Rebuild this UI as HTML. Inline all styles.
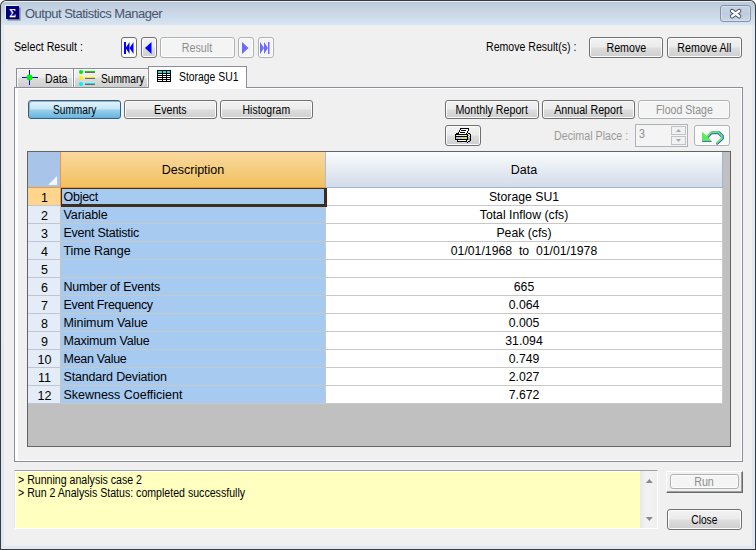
<!DOCTYPE html>
<html><head><meta charset="utf-8"><title>Output Statistics Manager</title>
<style>
*{box-sizing:border-box;margin:0;padding:0}
html,body{width:756px;height:550px;overflow:hidden;background:#fff}
body{font-family:"Liberation Sans",sans-serif;font-size:12px;color:#000;position:relative}
.abs{position:absolute}
#win{position:absolute;left:0;top:0;width:756px;height:550px;background:#3a3a3a;border-radius:6px 6px 0 0;overflow:hidden}
#frame{position:absolute;left:1px;top:1px;width:754px;height:548px;border-radius:5px 5px 0 0;background:linear-gradient(#e6ecf7 0,#e6ecf7 1px,#bccbdc 1px,#d7e4f2 24px,#e2eaf4 24px,#dfe7f2 100%)}
#client{position:absolute;left:4px;top:25px;width:748px;height:521px;background:#f0f0f0}
#title{left:25px;top:6px;font-size:13px;line-height:16px;color:#46546b;white-space:nowrap;letter-spacing:-0.5px}
#icon{left:6px;top:6px;width:13px;height:13px;background:#00007c;box-shadow:1.500px 1.500px 0 #7a7a84,-1px -1px 0 #eef2f8}
#closeb{left:720px;top:5px;width:31px;height:17px;border:1px solid #8491a8;border-radius:3px;background:linear-gradient(#c4d1e2,#bfcee0 50%,#bccbde 50%,#c8d6e6);box-shadow:inset 0 0 0 1px rgba(255,255,255,.3)}
.btn{position:absolute;border:1px solid #707070;border-radius:3px;background:linear-gradient(#f2f2f2 0,#ebebeb 48%,#dddddd 52%,#cfcfcf 100%);box-shadow:inset 0 0 0 1px #fcfcfc;text-align:center;white-space:nowrap;line-height:19px;height:19px}
.btn.dis{border-color:#adb2b5;background:#f4f4f4;color:#8e8e8e;box-shadow:inset 0 0 0 1px #fcfcfc}
.btn.sel{border-color:#2c628b;background:linear-gradient(#e5f4fc 0,#c4e5f6 48%,#98d1ef 52%,#68b3db 100%);box-shadow:inset 1px 1px 0 0 #9eb0ba}
.lbl{position:absolute;white-space:nowrap;line-height:13px;transform:scaleX(.89);transform-origin:0 0}
.t{display:inline-block;transform:scaleX(.89);transform-origin:50% 50%}
.tab{position:absolute;border:1px solid #8c8e97;border-bottom:none;background:linear-gradient(#f2f2f2 0,#ebebeb 48%,#dddddd 52%,#cfcfcf 100%);box-shadow:inset 1px 1px 0 #fcfcfc,inset -1px 0 0 #fcfcfc;white-space:nowrap}
.tab.sel{background:#fff;box-shadow:none}
#page{left:14px;top:87px;width:729px;height:375px;border:1px solid #8c8e97;background:#fff}
#pagein{left:18px;top:89px;width:723px;height:371px;background:#f0f0f0}
#grid{left:27px;top:151px;width:704px;height:296px;border:1px solid #646464;background:#c0c0c0;overflow:hidden}
.gfont{font-size:12.5px}
.row{position:absolute;left:0;height:18px;width:695px}
.rh{position:absolute;left:0;top:0;width:33px;height:18px;background:#e4ecf7;border-right:1px solid #c0c6d0;border-bottom:1px solid #c0c6d0;text-align:center;line-height:20px;padding-left:1px}
.c1{position:absolute;left:33px;top:0;width:265px;height:18px;background:#a7caf0;border-right:1px solid #c8c8c8;border-bottom:1px solid #c8c8c8;padding-left:2.500px;line-height:19px;white-space:nowrap}
.c2{position:absolute;left:298px;top:0;width:397px;height:18px;background:#fff;border-right:1px solid #c8c8c8;border-bottom:1px solid #c8c8c8;text-align:center;line-height:19px;white-space:pre;font-size:12.25px}
#log{left:14px;top:470px;width:644px;height:59px;background:#ffffc0;border:1px solid #fff;border-top-color:#a0a0a0;border-left-color:#e6e6e6;box-shadow:inset 1px 1px 0 #fff}
</style></head><body>
<div id="win"><div id="frame"></div><div id="client"></div>
<div id="icon" class="abs"></div>
<svg class="abs" style="left:6px;top:6px" width="13" height="13" viewBox="0 0 13 13"><text x="6.700" y="10.600" font-family="Liberation Serif,serif" font-size="11.500" fill="#fff" stroke="#fff" stroke-width="0.250" text-anchor="middle">Σ</text></svg>
<div id="title" class="abs">Output Statistics Manager</div>
<div id="closeb" class="abs"></div>
<svg class="abs" style="left:728px;top:7px" width="15" height="13" viewBox="0 0 15 13"><path d="M4 4l7.200 5.200M11.200 4l-7.200 5.200" stroke="#414d62" stroke-width="4.200" stroke-linecap="round" fill="none"/><path d="M4 4l7.200 5.200M11.200 4l-7.200 5.200" stroke="#fff" stroke-width="2.400" stroke-linecap="round" fill="none"/></svg>

<div class="lbl" style="left:14px;top:41px" id="l1">Select Result :</div>
<div class="btn" style="left:121px;top:37px;width:16px;height:21px;background:#fdfdf6" id="nb1"></div>
<div class="btn" style="left:141px;top:37px;width:16px;height:21px" id="nb2"></div>
<div class="btn dis" style="left:160px;top:37px;width:75px;height:21px;line-height:21px" id="nb3"><span class="t" style="transform:scaleX(0.89)">Result</span></div>
<div class="btn dis" style="left:238px;top:37px;width:16px;height:21px" id="nb4"></div>
<div class="btn dis" style="left:258px;top:37px;width:16px;height:21px" id="nb5"></div>
<svg class="abs" style="left:121px;top:37px" width="153" height="21" viewBox="0 0 153 21">
 <g fill="#0000ff"><rect x="3" y="5" width="2" height="12"/><path d="M8.5 5v12L4.500 11z"/><path d="M12.500 5v12L8.500 11z"/>
 <path d="M30.500 5v12L24 11z"/></g>
 <g fill="#6c6cf8"><path d="M121 5v12l6.500-6z"/>
 <path d="M139 5v12l4-6z"/><path d="M143 5v12l4-6z"/><rect x="147" y="5" width="1.500" height="12"/></g>
</svg>
<div class="lbl" style="left:486px;top:41px;transform:scaleX(.88)" id="l2">Remove Result(s) :</div>
<div class="btn" style="left:589px;top:37px;width:74px;height:21px;line-height:21px" id="b_rm"><span class="t" style="transform:scaleX(0.89)">Remove</span></div>
<div class="btn" style="left:667px;top:37px;width:75px;height:21px;line-height:21px" id="b_rma"><span class="t" style="transform:scaleX(0.89)">Remove All</span></div>

<div id="page" class="abs"></div><div id="pagein" class="abs"></div>
<div class="tab" style="left:16px;top:68px;width:58px;height:19px" id="tab1"><span class="lbl" style="left:27.5px;top:4px">Data</span></div>
<div class="tab" style="left:73px;top:68px;width:76px;height:19px" id="tab2"><span class="lbl" style="left:27px;top:4px;transform:scaleX(.845)">Summary</span></div>
<div class="tab sel" style="left:148px;top:66px;width:99px;height:22px" id="tab3"><span class="lbl" style="left:30px;top:4px;transform:scaleX(.865)">Storage SU1</span></div>
<svg class="abs" style="left:20px;top:68px" width="80" height="19" viewBox="0 0 80 19">
 <path d="M9.500 2v15M2 9.500h16" stroke="#0000ff" stroke-width="1" fill="none"/><circle cx="9.500" cy="9.500" r="3" fill="#00f000"/>
 <circle cx="61" cy="4" r="2.100" fill="#00e800"/><circle cx="61" cy="10" r="2.100" fill="#fff000"/><circle cx="61" cy="16" r="2.100" fill="#00f0f8"/>
 <rect x="65" y="3" width="10" height="1" fill="#00e000"/><rect x="65" y="9" width="10" height="1" fill="#f8e800"/><rect x="65" y="15" width="10" height="1" fill="#00e8f0"/>
 <rect x="65" y="4" width="10" height="1" fill="#6a6a6a"/><rect x="65" y="10" width="10" height="1" fill="#6a6a6a"/><rect x="65" y="16" width="10" height="1" fill="#6a6a6a"/>
</svg>
<svg class="abs" style="left:157px;top:70px" width="14" height="12" viewBox="0 0 14 12" shape-rendering="crispEdges"><rect x="0" y="0" width="14" height="12" fill="#000"/>
 <g fill="#00e8f0"><rect x="1" y="1" width="4" height="2"/><rect x="6" y="1" width="3" height="2"/><rect x="10" y="1" width="3" height="2"/></g>
 <g fill="#fff"><rect x="1" y="4" width="4" height="1"/><rect x="6" y="4" width="3" height="1"/><rect x="10" y="4" width="3" height="1"/>
 <rect x="1" y="6" width="4" height="1"/><rect x="6" y="6" width="3" height="1"/><rect x="10" y="6" width="3" height="1"/>
 <rect x="1" y="8" width="4" height="1"/><rect x="6" y="8" width="3" height="1"/><rect x="10" y="8" width="3" height="1"/>
 <rect x="1" y="10" width="4" height="1"/><rect x="6" y="10" width="3" height="1"/><rect x="10" y="10" width="3" height="1"/></g>
</svg>

<div class="btn sel" style="left:28px;top:100px;width:93px" id="b_sum"><span class="t" style="transform:scaleX(0.845)">Summary</span></div>
<div class="btn" style="left:124px;top:100px;width:93px" id="b_ev"><span class="t" style="transform:scaleX(0.89)">Events</span></div>
<div class="btn" style="left:220px;top:100px;width:93px" id="b_hist"><span class="t" style="transform:scaleX(0.87)">Histogram</span></div>
<div class="btn" style="left:445px;top:100px;width:94px" id="b_mr"><span class="t" style="transform:scaleX(0.89)">Monthly Report</span></div>
<div class="btn" style="left:542px;top:100px;width:93px" id="b_ar"><span class="t" style="transform:scaleX(0.89)">Annual Report</span></div>
<div class="btn dis" style="left:638px;top:100px;width:92px" id="b_fs"><span class="t" style="transform:scaleX(0.88)">Flood Stage</span></div>
<div class="btn" style="left:445px;top:125px;width:36px;height:21px" id="b_pr"></div>
<svg class="abs" style="left:455px;top:128px" width="17" height="15" viewBox="0 0 17 15" shape-rendering="crispEdges"><path d="M12.500 4.500l3 2v6l-3 2" transform="translate(0,0)" fill="#9a9a9a" stroke="#000" stroke-width="1"/><rect x="5" y="0" width="9" height="1" fill="#000"/><rect x="5" y="1" width="1" height="1" fill="#000"/><rect x="6" y="1" width="7" height="1" fill="#fff"/><rect x="13" y="1" width="1" height="1" fill="#000"/><rect x="4" y="2" width="1" height="1" fill="#000"/><rect x="5" y="2" width="1" height="1" fill="#fff"/><rect x="6" y="2" width="5" height="1" fill="#000"/><rect x="11" y="2" width="2" height="1" fill="#fff"/><rect x="13" y="2" width="1" height="1" fill="#000"/><rect x="4" y="3" width="1" height="1" fill="#000"/><rect x="5" y="3" width="7" height="1" fill="#fff"/><rect x="12" y="3" width="1" height="1" fill="#000"/><rect x="3" y="4" width="1" height="1" fill="#000"/><rect x="4" y="4" width="1" height="1" fill="#fff"/><rect x="5" y="4" width="5" height="1" fill="#000"/><rect x="10" y="4" width="2" height="1" fill="#fff"/><rect x="12" y="4" width="1" height="1" fill="#000"/><rect x="1" y="5" width="3" height="1" fill="#000"/><rect x="4" y="5" width="7" height="1" fill="#fff"/><rect x="11" y="5" width="1" height="1" fill="#000"/><rect x="0" y="6" width="13" height="1" fill="#000"/><rect x="0" y="7" width="1" height="1" fill="#000"/><rect x="1" y="7" width="11" height="1" fill="#e8e8e8"/><rect x="12" y="7" width="1" height="1" fill="#000"/><rect x="0" y="8" width="13" height="1" fill="#000"/><rect x="0" y="9" width="1" height="1" fill="#000"/><rect x="1" y="9" width="6" height="1" fill="#c0c0c8"/><rect x="7" y="9" width="4" height="1" fill="#e8e800"/><rect x="11" y="9" width="1" height="1" fill="#c0c0c8"/><rect x="12" y="9" width="1" height="1" fill="#000"/><rect x="0" y="10" width="1" height="1" fill="#000"/><rect x="1" y="10" width="6" height="1" fill="#c0c0c8"/><rect x="7" y="10" width="4" height="1" fill="#e8e800"/><rect x="11" y="10" width="1" height="1" fill="#c0c0c8"/><rect x="12" y="10" width="1" height="1" fill="#000"/><rect x="0" y="11" width="13" height="1" fill="#000"/><rect x="2" y="12" width="1" height="1" fill="#000"/><rect x="3" y="12" width="8" height="1" fill="#fff"/><rect x="11" y="12" width="1" height="1" fill="#000"/><rect x="2" y="13" width="10" height="1" fill="#000"/><rect x="13" y="6" width="1" height="1" fill="#fff"/><rect x="14" y="7" width="1" height="1" fill="#fff"/><rect x="13" y="8" width="1" height="1" fill="#fff"/><rect x="14" y="9" width="1" height="1" fill="#fff"/><rect x="13" y="12" width="1" height="1" fill="#fff"/></svg>
<div class="lbl" style="left:554px;top:130px;color:#9a9a9a" id="l3">Decimal Place :</div>
<div class="abs" style="left:635px;top:124px;width:53px;height:23px;border:1px solid #adb2b5;background:#f4f4f4" id="spin"><span class="lbl" style="left:3px;top:3px;color:#8e8e8e;font-size:12px">3</span>
 <div class="abs" style="left:35px;top:1px;width:15px;height:9px;border:1px solid #c0c2c6;background:#f1f1f1"></div><div class="abs" style="left:35px;top:11px;width:15px;height:9px;border:1px solid #c0c2c6;background:#f1f1f1"></div>
 <svg class="abs" style="left:35px;top:1px" width="15" height="19"><path d="M5 6l2.500-3 2.500 3z" fill="#a8a8a8"/><path d="M5 13l2.500 3 2.500-3z" fill="#a8a8a8"/></svg></div>
<div class="btn dis" style="left:694px;top:125px;width:36px;height:21px;background:#fbfbfb" id="b_un"></div>
<svg class="abs" style="left:694px;top:125px" width="36" height="21" viewBox="0 0 36 21">
 <path d="M8 7.500v9.500h10z" fill="#4040ff"/>
 <path d="M12.500 12.200L17.300 7.200H24.300L27.800 10.900V13.600L22.500 18.300" fill="none" stroke="#4444ff" stroke-width="1.800" transform="translate(1.100,0)"/>
 <path d="M12.500 12.200L17.300 7.200H24.300L27.800 10.900V13.600L22.500 18.300" fill="none" stroke="#4444ff" stroke-width="1.800" transform="translate(0,1.100)"/>
 <path d="M8 6.800v9.500h9.800z" fill="#58ee58"/>
 <path d="M12.500 12.200L17.300 7.200H24.300L27.800 10.900V13.600L22.500 18.300" fill="none" stroke="#58ee58" stroke-width="1.900"/>
</svg>

<div id="grid" class="abs gfont">
 <div class="abs" style="left:0;top:0;width:33px;height:36px;background:#a9c4e9;border-right:1px solid #f29536;border-bottom:1px solid #f29536"></div>
 <svg class="abs" style="left:20px;top:24px" width="9" height="9"><path d="M9 0v9H0z" fill="#f4f6fa"/></svg>
 <div class="abs" style="left:33px;top:0;width:265px;height:36px;background:linear-gradient(#f9d99f,#f1c15f);border-right:1px solid #9ebfe0;border-bottom:1px solid #f29536;text-align:center;line-height:37px">Description</div>
 <div class="abs" style="left:298px;top:0;width:397px;height:36px;background:linear-gradient(#f9fcfd,#d3dbe9);border-right:1px solid #9eb6ce;border-bottom:1px solid #9eb6ce;text-align:center;line-height:37px">Data</div>
 
 <div class="row" style="top:36px"><div class="rh" style="background:#ffd58d;border-right-color:#f29536">1</div><div class="c1" style="letter-spacing:-0.27px">Object</div><div class="c2">Storage SU1</div></div>
 <div class="row" style="top:54px"><div class="rh">2</div><div class="c1" style="letter-spacing:-0.1px">Variable</div><div class="c2">Total Inflow (cfs)</div></div>
 <div class="row" style="top:72px"><div class="rh">3</div><div class="c1" style="letter-spacing:-0.24px">Event Statistic</div><div class="c2">Peak (cfs)</div></div>
 <div class="row" style="top:90px"><div class="rh">4</div><div class="c1" style="letter-spacing:-0.06px">Time Range</div><div class="c2">01/01/1968  to  01/01/1978</div></div>
 <div class="row" style="top:108px"><div class="rh">5</div><div class="c1"></div><div class="c2"></div></div>
 <div class="row" style="top:126px"><div class="rh">6</div><div class="c1" style="letter-spacing:-0.22px">Number of Events</div><div class="c2">665</div></div>
 <div class="row" style="top:144px"><div class="rh">7</div><div class="c1" style="letter-spacing:-0.35px">Event Frequency</div><div class="c2">0.064</div></div>
 <div class="row" style="top:162px"><div class="rh">8</div><div class="c1" style="letter-spacing:-0.08px">Minimum Value</div><div class="c2">0.005</div></div>
 <div class="row" style="top:180px"><div class="rh">9</div><div class="c1" style="letter-spacing:-0.2px">Maximum Value</div><div class="c2">31.094</div></div>
 <div class="row" style="top:198px"><div class="rh">10</div><div class="c1" style="letter-spacing:-0.28px">Mean Value</div><div class="c2">0.749</div></div>
 <div class="row" style="top:216px"><div class="rh">11</div><div class="c1" style="letter-spacing:-0.17px">Standard Deviation</div><div class="c2">2.027</div></div>
 <div class="row" style="top:234px"><div class="rh">12</div><div class="c1" style="letter-spacing:-0.02px">Skewness Coefficient</div><div class="c2">7.672</div></div>
 <div class="abs" style="left:33px;top:36px;width:266px;height:19px;border:solid #3e2e1e;border-width:1px 3px 3px 1px"></div>
</div>

<div id="log" class="abs"><div class="lbl" style="left:3px;top:3px;transform:scaleX(.883)">&gt; Running analysis case 2</div><div class="lbl" style="left:3px;top:16px;transform:scaleX(.883)">&gt; Run 2 Analysis Status: completed successfully</div>
 <div class="abs" style="left:625px;top:0;width:17px;height:57px;background:linear-gradient(90deg,#e9e9e9,#f3f3f3 40%,#efefef)"></div>
 <svg class="abs" style="left:625px;top:0" width="17" height="57"><path d="M5.800 12l3.500-4 3.500 4z" fill="#8a8a8a"/><path d="M5.800 46l3.500 4 3.500-4z" fill="#8a8a8a"/></svg>
</div>
<div class="abs" style="left:666px;top:471px;width:77px;height:22px;border:1px solid #fff;border-right-color:#696969;border-bottom-color:#696969;box-shadow:inset -1px -1px 0 #a0a0a0" id="runpanel"></div>
<div class="btn dis" style="left:670px;top:474px;width:69px;height:15px;line-height:15px" id="b_run"><span class="t" style="transform:scaleX(0.89)">Run</span></div>
<div class="btn" style="left:667px;top:509px;width:75px;height:21px;line-height:21px" id="b_close"><span class="t" style="transform:scaleX(0.85)">Close</span></div>
</div>
</body></html>
